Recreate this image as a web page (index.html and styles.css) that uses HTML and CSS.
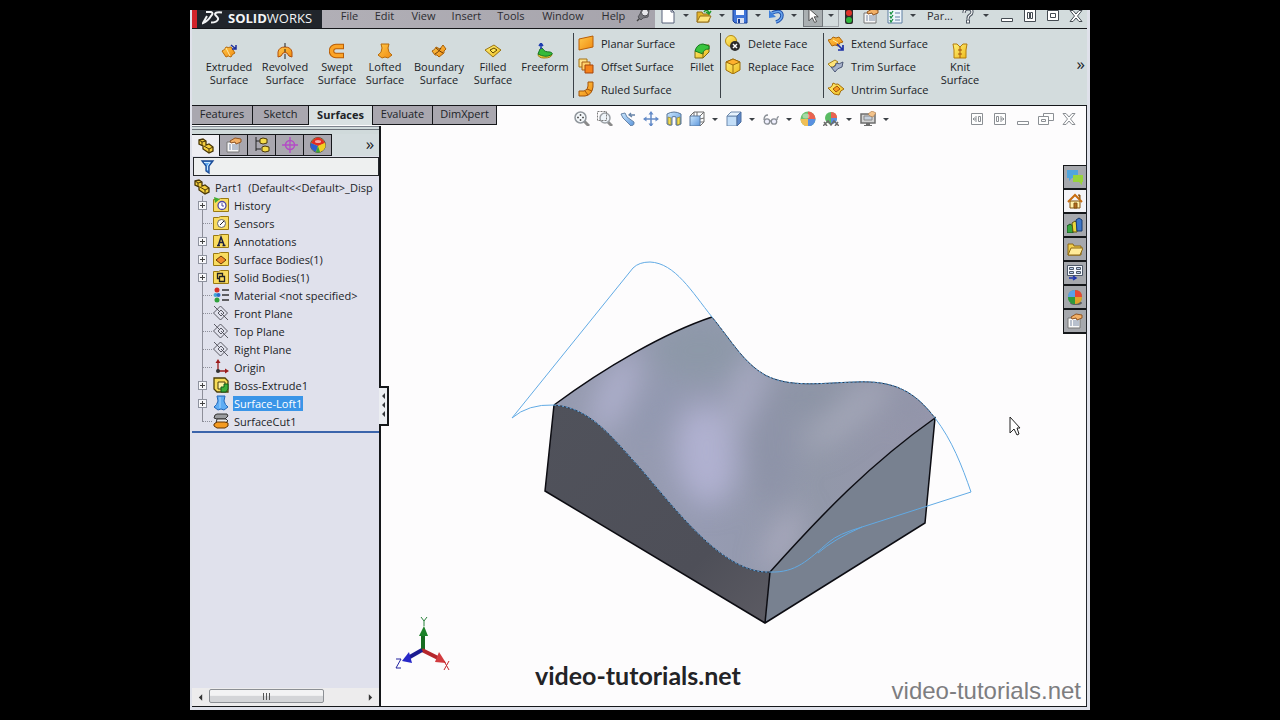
FILE: index.html
```html
<!DOCTYPE html>
<html lang="en">
<head>
<meta charset="utf-8">
<meta name="viewport" content="width=device-width, initial-scale=1">
<title>SolidWorks - Part1</title>
<link rel="stylesheet" href="styles.css">
</head>
<body>
<svg class="defs" aria-hidden="true">
  <defs>
    <linearGradient id="or" x1="0" y1="0" x2="1" y2="1"><stop offset="0" stop-color="#ffc94a"/><stop offset="1" stop-color="#f08a10"/></linearGradient>
    <linearGradient id="ye" x1="0" y1="0" x2="1" y2="1"><stop offset="0" stop-color="#fff27a"/><stop offset="1" stop-color="#eeb91c"/></linearGradient>
    <linearGradient id="bl" x1="0" y1="0" x2="1" y2="1"><stop offset="0" stop-color="#c6e6ff"/><stop offset="1" stop-color="#3f84d6"/></linearGradient>
  </defs>
  <symbol id="extruded" viewBox="0 0 16 16"><path d="M1 8q3-1 4-4 2 1 5 0l4 6q-3 1-4 4-3-2-5 0z" fill="url(#or)" stroke="#b86a08"/><path d="M5 5l4 8" stroke="#ffe9a0"/><path d="M10 2l5 4M15 2v4h-4" fill="none" stroke="#1e2f9c" stroke-width="1.5"/></symbol>
  <symbol id="revolved" viewBox="0 0 16 16"><path d="M1 14V9q1-5 7-5t7 5v5l-3-1-2-3q-2-1-4 0l-2 3z" fill="url(#or)" stroke="#b3500a"/><path d="M8 0v4m0 2v3m0 2v5" stroke="#222"/></symbol>
  <symbol id="swept" viewBox="0 0 16 16"><path d="M15 3.500H7a4.500 4.500 0 0 0 0 9h8" fill="none" stroke="#b85e08" stroke-width="5.500"/><path d="M14 3.500H7a4.500 4.500 0 0 0 0 9h7" fill="none" stroke="#fba427" stroke-width="3.500"/></symbol>
  <symbol id="lofted" viewBox="0 0 16 16"><path d="M4 1h8l-1 4q0 5 4 7l-4 3q-3-2-6 0l-4-3q4-2 4-7z" fill="url(#or)" stroke="#b86a08"/></symbol>
  <symbol id="boundary" viewBox="0 0 16 16"><path d="M1 8q3-1 4-4l4 2 3-4 3 4q-3 2-2 4l-5 4q-2-3-4-2z" fill="url(#or)" stroke="#a86008"/><path d="M4 11q4-2 6-6M5 5q3 3 7 5" fill="none" stroke="#713c05"/></symbol>
  <symbol id="filled" viewBox="0 0 16 16"><path d="M0 7l9-5 7 5-8 7z" fill="url(#ye)" stroke="#9a7410"/><path d="M5 7l4-2 3 2-4 3z" fill="#ffe85a" stroke="#5d4300"/></symbol>
  <symbol id="freeform" viewBox="0 0 16 16"><path d="M1 11q0 4 6 4 8 0 8-4z" fill="#f4d438" stroke="#9a7e10"/><path d="M1 11l2-5q2-2 3 0 1 3 7 3 4 1 1 3-6 3-13-1z" fill="#35bb3a" stroke="#177526"/><path d="M4 6V1M2 3l2-3 2 3" fill="none" stroke="#1c3bb0" stroke-width="1.500"/></symbol>
  <symbol id="planar" viewBox="0 0 16 16"><path d="M1 4l14-3v11L1 15z" fill="url(#or)" stroke="#b85e08"/></symbol>
  <symbol id="offset" viewBox="0 0 16 16"><path d="M1 1h8v8H1z" fill="#ffe48c" stroke="#a57214"/><path d="M4 4h8v8H4z" fill="#ffd06a" stroke="#a55c14"/><path d="M7 7h8v8H7z" fill="#f5821a" stroke="#a5440c"/></symbol>
  <symbol id="ruled" viewBox="0 0 16 16"><path d="M10 1h5v5q-1 8-8 9H1v-5h5q4-1 4-5z" fill="url(#or)" stroke="#a3540a"/><path d="M7 10l3 4M9 8l5 2" stroke="#a3540a"/></symbol>
  <symbol id="fillet" viewBox="0 0 16 16"><path d="M1 15V8l6-6h8v7l-6 6z" fill="url(#ye)" stroke="#7e6a10"/><path d="M1 8q2-7 8-7l6 2v3q-6 0-6 5L1 8z" fill="#39c43e" stroke="#157a20"/><path d="M9 15V9" stroke="#7e6a10"/></symbol>
  <symbol id="delface" viewBox="0 0 16 16"><circle cx="6" cy="6" r="5.500" fill="url(#ye)" stroke="#b48a14"/><circle cx="10" cy="11" r="5" fill="#2b2b2b"/><path d="M8 9l4 4m0-4l-4 4" stroke="#fff" stroke-width="1.500"/></symbol>
  <symbol id="repface" viewBox="0 0 16 16"><path d="M1 4l7-3 7 3v8l-7 4-7-4z" fill="url(#ye)" stroke="#9c6c0a"/><path d="M1 4l7 3 7-3-7-3z" fill="#ffb12e" stroke="#9c6c0a"/><path d="M8 7v9" stroke="#9c6c0a"/></symbol>
  <symbol id="extend" viewBox="0 0 16 16"><path d="M0 5q4 0 5-3 3 2 6 0l4 5q-4 0-5 4-3-2-6 0z" fill="url(#or)" stroke="#ad6406"/><path d="M5 5l5 3" stroke="#fff0a0"/><path d="M9 9l5 5M15 10v5h-5" fill="none" stroke="#1b2fa5" stroke-width="1.700"/></symbol>
  <symbol id="trim" viewBox="0 0 16 16"><path d="M0 6l7-4 3 2-6 6z" fill="#ffe47a" stroke="#a58220"/><path d="M3 9q5 1 5-4 3 2 7-1l-1 5q-5 1-7 5z" fill="#a9b4cc" stroke="#4a5675"/></symbol>
  <symbol id="untrim" viewBox="0 0 16 16"><path d="M0 7q4 0 5-5 3 2 5 1l6 5q-4 1-5 6l-5-1z" fill="url(#ye)" stroke="#a56c06"/><path d="M5 8l4-3 3 3-4 3z" fill="#f79b20" stroke="#a5540a"/></symbol>
  <symbol id="knit" viewBox="0 0 16 16"><path d="M1 1h4l3 3 3-3h4l-1 6v8H2V7z" fill="url(#ye)" stroke="#b47c0a"/><path d="M8 4v11M6 7h4M6 11h4" stroke="#a5540a"/></symbol>
  <symbol id="new" viewBox="0 0 16 16"><path d="M2 1h9l3 3v11H2z" fill="#fff" stroke="#59637a"/><path d="M11 1v3h3" fill="none" stroke="#59637a"/></symbol>
  <symbol id="open" viewBox="0 0 16 16"><path d="M1 14V4h5l1 2h6v8z" fill="#e4b52c" stroke="#96701a"/><path d="M1 14l3-6h11l-3 6z" fill="#ffe57c" stroke="#96701a"/><path d="M8 4q3-4 5 1m2-2l-2 3-3-2" fill="none" stroke="#259b2b" stroke-width="1.500"/></symbol>
  <symbol id="save" viewBox="0 0 16 16"><path d="M1 1h14v14H3l-2-2z" fill="#3f74d8" stroke="#173d94"/><path d="M4 1h8v6H4z" fill="#f4f7ff"/><path d="M5 10h7v5H5z" fill="#d7def0"/><path d="M6 11h2v4H6z" fill="#173d94"/></symbol>
  <symbol id="undo" viewBox="0 0 16 16"><path d="M4 5q9-4 10 2 0 5-6 7" fill="none" stroke="#1f4fa8" stroke-width="3.500"/><path d="M4 5q9-4 10 2 0 5-6 7" fill="none" stroke="#68a5ee" stroke-width="1.500"/><path d="M1 2v8l7-1z" fill="#3f80db"/></symbol>
  <symbol id="cursor" viewBox="0 0 16 20"><path d="M3 1v15l4-4 3 6 2.500-1-3-6h5z" fill="#fff" stroke="#333"/></symbol>
  <symbol id="traffic" viewBox="0 0 16 16"><rect x="4" y="-1" width="8" height="17" rx="2" fill="#2b2b2b"/><circle cx="8" cy="5" r="3" fill="#e03128"/><circle cx="8" cy="12" r="3" fill="#30b53c"/></symbol>
  <symbol id="handprop" viewBox="0 0 16 16"><path d="M1 5h12v10H1z" fill="#f8f8f8" stroke="#777"/><path d="M3 8h2m1 0h6M3 10h2m1 0h6M3 12h2m1 0h6" stroke="#7888a2"/><path d="M4 4l5-3 6 1v3l-5 2-1-2-4 1z" fill="#f2b066" stroke="#925522"/></symbol>
  <symbol id="options" viewBox="0 0 16 16"><path d="M1 1h14v14H1z" fill="#eef5fb" stroke="#5f7fa2"/><path d="M8 5h5M8 9h5M8 12h5" stroke="#5f7fa2"/><path d="M3 4l1 2 2-3M3 8l1 2 2-3M3 12l1 2 2-3" fill="none" stroke="#189040" stroke-width="1.300"/></symbol>
  <symbol id="help" viewBox="0 0 16 16"><path d="M4 5q0-4 4-4t4 3q0 2-2 3T8 11" fill="none" stroke="#4c5560" stroke-width="3.200"/><path d="M4 5q0-4 4-4t4 3q0 2-2 3T8 11" fill="none" stroke="#f8fafa" stroke-width="1.200"/><rect x="6.500" y="12" width="3" height="3" fill="#fff" stroke="#4c5560"/></symbol>
  <symbol id="pin" viewBox="0 0 16 16"><path d="M2 14l4-4" stroke="#444" stroke-width="1.500"/><path d="M3 10l2-3 2-5 7 1-1 7-5 1-2 2z" fill="#77777d" stroke="#55555b"/><circle cx="10" cy="5.500" r="3.500" fill="#e6e6ea" stroke="#4a4a50"/></symbol>
  <symbol id="min" viewBox="0 0 16 16"><path d="M2.500 10.500h11v3h-11z" fill="#fff" stroke="currentColor"/></symbol>
  <symbol id="tile" viewBox="0 0 16 16"><path d="M2.500 1.500h11v12h-11zM5.500 4.500h2v6h-2zM8.500 4.500h2v6h-2z" fill="#fff" stroke="currentColor"/></symbol>
  <symbol id="max" viewBox="0 0 16 16"><path d="M2.500 2.500h11v10h-11zM5.500 5.500h5v4h-5z" fill="#fff" stroke="currentColor"/></symbol>
  <symbol id="close" viewBox="0 0 16 16"><path d="M2 2.500h3l3 3.500 3-3.500h3L9.500 8l4.500 5.500h-3L8 10l-3 3.500H2L6.500 8z" fill="#fff" stroke="currentColor"/></symbol>
  <symbol id="cascade" viewBox="0 0 16 16"><path d="M5.500 2.500h10v7h-10z" fill="#fff" stroke="currentColor"/><path d="M.5 5.500h10v8H.5zM3.500 8.500h4v2h-4z" fill="#fff" stroke="currentColor"/></symbol>
  <symbol id="panL" viewBox="0 0 16 16"><path d="M2.500 2.500h11v11h-11z" fill="#fff" stroke="currentColor"/><path d="M7 5v6M9.500 5.500h2v5h-2zM4 8h3M5.500 6.500L4 8l1.500 1.500" fill="none" stroke="currentColor"/></symbol>
  <symbol id="panR" viewBox="0 0 16 16"><path d="M2.500 2.500h11v11h-11z" fill="#fff" stroke="currentColor"/><path d="M9 5v6M4.500 5.500h2v5h-2zM9 8h3m-1.500-1.500L12 8l-1.500 1.500" fill="none" stroke="currentColor"/></symbol>
  <symbol id="zoomfit" viewBox="0 0 16 16"><path d="M10 10l5 5" stroke="#777" stroke-width="3"/><circle cx="6.500" cy="6.500" r="5.500" fill="#f3f8fb" stroke="#7e858c" stroke-width="1.500"/><path d="M6.500 3v2M6.500 8v2M3 6.500h2M8 6.500h2" stroke="#444" stroke-width="1.500"/></symbol>
  <symbol id="zoomarea" viewBox="0 0 16 16"><path d="M10 10l5 5" stroke="#777" stroke-width="3"/><circle cx="8" cy="7" r="5" fill="#edf4fa" stroke="#8c9298" stroke-width="1.500"/><path d="M.5.500h9v9h-9z" fill="none" stroke="#666" stroke-dasharray="2 1"/></symbol>
  <symbol id="prevview" viewBox="0 0 16 16"><path d="M1 3l4-1 2 4 7 5q1 3-3 4L5 9 3 7z" fill="url(#bl)" stroke="#4c6f9a"/><path d="M15 4H9m2-2L9 4l3 2" fill="none" stroke="#4c6f9a" stroke-width="1.300"/></symbol>
  <symbol id="pan" viewBox="0 0 16 16"><path d="M8 1v14M1 8h14" stroke="#4a78bf" stroke-width="1.500"/><path d="M5.500 3.500L8 0l2.500 3.500zM5.500 12.500L8 16l2.500-3.500zM3.500 5.500L0 8l3.500 2.500zM12.500 5.500L16 8l-3.500 2.500z" fill="#4a78bf"/></symbol>
  <symbol id="section" viewBox="0 0 16 16"><path d="M1 3q7-4 14 0v10q-3 2-5 1V6q-2-1-4 0v8q-3 1-5-1z" fill="url(#bl)" stroke="#3d5f88"/><path d="M2 6l3 1v7l-3-1zM11 7l3-1v7l-3 1z" fill="#f2d835" stroke="#7b6b16" stroke-width=".7"/></symbol>
  <symbol id="orient" viewBox="0 0 16 16"><path d="M5 5V1h10v10h-4" fill="#fff" stroke="#555"/><path d="M1 5h10v10H1z" fill="url(#bl)" stroke="#3b618f"/><path d="M1 5l4-4M11 5l4-4M11 15l4-4M8 1v4M11 8l4-1" stroke="#555"/></symbol>
  <symbol id="display" viewBox="0 0 16 16"><path d="M1 5h10v10H1z" fill="#b9d9f8" stroke="#55779f"/><path d="M1 5l4-4h10l-4 4z" fill="#e3f1fd" stroke="#55779f"/><path d="M11 5l4-4v10l-4 4z" fill="#4275c2" stroke="#2f568f"/></symbol>
  <symbol id="glasses" viewBox="0 0 16 16"><circle cx="4" cy="10.500" r="2.700" fill="#eef" stroke="#757b84" stroke-width="1.300"/><circle cx="11" cy="10.500" r="2.700" fill="#eef" stroke="#757b84" stroke-width="1.300"/><path d="M1 9q0-5 4-5M14 9q0-4 2-3M7 10h1" fill="none" stroke="#757b84" stroke-width="1.300"/></symbol>
  <symbol id="ball" viewBox="0 0 16 16"><circle cx="8" cy="8" r="7.500" fill="#52b755"/><path d="M8 8V.5A7.500 7.500 0 0 1 15.500 8z" fill="#e74834"/><path d="M8 8h7.500A7.500 7.500 0 0 1 8 15.500z" fill="#3d7edb"/><path d="M8 8v7.500A7.500 7.500 0 0 1 .5 8z" fill="#f0b53a"/><ellipse cx="6" cy="5" rx="3.500" ry="2.500" fill="#fff" opacity=".4"/></symbol>
  <symbol id="balltask" viewBox="0 0 16 16"><ellipse cx="9" cy="14" rx="6" ry="2" fill="#5c5e63"/><circle cx="8" cy="8" r="7" fill="#3eb049"/><path d="M8 8V1q7 0 7 7z" fill="#e74834"/><path d="M1 8q0 7 7 7V8z" fill="#2f9a3c"/><path d="M8 8h7q0 7-7 7z" fill="#e0a52c"/><path d="M8 8V1q-7 0-7 7z" fill="#5a9fe8"/></symbol>
  <symbol id="scene" viewBox="0 0 16 16"><circle cx="8" cy="7" r="6" fill="#3eb049"/><path d="M8 7V1q6 0 6 6z" fill="#e74834"/><path d="M8 7h6q0 6-6 6z" fill="#3d7edb"/><path d="M0 15l5-5 3 4 3-4 5 5M1 11l3 4M15 11l-3 4" fill="none" stroke="#555" stroke-width="1.500"/></symbol>
  <symbol id="monitor" viewBox="0 0 16 16"><path d="M1 3h14v9H1z" fill="#ccc" stroke="#555" stroke-width="1.500"/><path d="M4 5h8v4H4z" fill="#bcc9d8" stroke="#777"/><path d="M6 12h4v2h2v1H4v-1h2z" fill="#555"/><path d="M8 3l4-3 4 2-3 4-3-1z" fill="#f2ba78" stroke="#a26a36" stroke-width=".7"/></symbol>
  <symbol id="part" viewBox="0 0 16 16"><path d="M1 2l4-1 3 2v4l3-1 4 3v4l-4 2-6-4V8L1 6z" fill="#f5cf3e" stroke="#4b3806" stroke-width="1.300"/><path d="M1 2l3 2 4-1M4 4v4M6 8l5 3 4-2M11 11v4" fill="none" stroke="#4b3806"/></symbol>
  <symbol id="config" viewBox="0 0 16 16"><path d="M2 0v14M2 4h4M2 12h5" stroke="#222" fill="none"/><path d="M6 2l3-1 4 1v4l-4 1-3-1zM8 10l3-1 4 1v4l-4 1-3-1z" fill="#f5dc4a" stroke="#4b3806"/></symbol>
  <symbol id="dimx" viewBox="0 0 16 16"><circle cx="8" cy="8" r="4.500" fill="none" stroke="#b44cc6" stroke-width="1.500"/><path d="M8 0v16M0 8h16" stroke="#b44cc6" stroke-width="1.300"/></symbol>
  <symbol id="appear" viewBox="0 0 16 16"><circle cx="8" cy="8" r="7.500" fill="#f1d024" stroke="#333" stroke-width=".7"/><path d="M8 9L1 6q7-11 14 0z" fill="#e32c22"/><path d="M8 9L1 6q-2 6 5 9z" fill="#2e5ed0"/><path d="M8 9l7-3q2 6-5 9z" fill="#f1d024"/><path d="M8 9l-2 6q2 1 4 0z" fill="#38a53b"/><ellipse cx="8" cy="4.500" rx="3" ry="1.500" fill="#fff" opacity=".6"/></symbol>
  <symbol id="filter" viewBox="0 0 16 16"><path d="M3 2h11l-4 5v7l-3-2V7z" fill="#5ea7ef" stroke="#1a4a96" stroke-width="1.300"/><path d="M5 3.500h6L8.500 7v4" fill="none" stroke="#c9e7ff"/></symbol>
  <symbol id="fold" viewBox="0 0 16 16"><path d="M.5 14.500v-12h5l2-1h8v13z" fill="#f9dc5f" stroke="#9a7a12"/></symbol>
  <symbol id="history" viewBox="0 0 16 16"><use href="#fold"/><circle cx="9" cy="8.500" r="4" fill="#fff" stroke="#5148a5" stroke-width="1.300"/><path d="M9 6v3h2" fill="none" stroke="#5148a5"/><path d="M1 0l6 2-5 4z" fill="#41ad2f"/></symbol>
  <symbol id="sensors" viewBox="0 0 16 16"><use href="#fold"/><circle cx="8.500" cy="8.500" r="4" fill="#fff" stroke="#666"/><path d="M7 10l4-4" stroke="#222"/></symbol>
  <symbol id="annot" viewBox="0 0 16 16"><use href="#fold"/><path d="M4 12.500h3M9.500 12.500h3M5.500 12L8 4l3 8M6.500 9.500h3.500" fill="none" stroke="#1d2140" stroke-width="1.500"/></symbol>
  <symbol id="surfb" viewBox="0 0 16 16"><use href="#fold"/><path d="M3 9l5-4 5 4-5 4z" fill="#f28b28" stroke="#6d3906"/></symbol>
  <symbol id="solidb" viewBox="0 0 16 16"><use href="#fold"/><path d="M4.500 4.500h5v5h-5z" fill="none" stroke="#222" stroke-width="1.300"/><path d="M6.500 7.500h5v5h-5z" fill="#f9dc5f" stroke="#222" stroke-width="1.300"/></symbol>
  <symbol id="material" viewBox="0 0 16 16"><path d="M9 3h7M9 8h7M9 13h7" stroke="#333" stroke-width="1.500"/><circle cx="4" cy="3" r="2.500" fill="#d52e25"/><circle cx="2.500" cy="8" r="2" fill="#42a6d6"/><circle cx="5.500" cy="8" r="2" fill="#2b68c8"/><circle cx="4" cy="13" r="2.500" fill="#2fa23c"/></symbol>
  <symbol id="plane" viewBox="0 0 16 16"><path d="M7.500 1l7 7-7 7-7-7zM1 1l6 6M8 8l7 7M5 8l3-3 3 3-3 3z" fill="none" stroke="#4b4b55" stroke-width=".9"/></symbol>
  <symbol id="origin" viewBox="0 0 16 16"><path d="M5 13V3M5 12h8" stroke="#9c1c1c" stroke-width="1.300" fill="none"/><path d="M2.500 4L5 0l2.500 4zM12 9.500l4 2.500-4 2.500z" fill="#9c1c1c"/><circle cx="5" cy="12" r="2" fill="#333"/></symbol>
  <symbol id="boss" viewBox="0 0 16 16"><path d="M1 1h11l3 3v11H4l-3-3z" fill="#f7dc58" stroke="#4d3f08" stroke-width="1.300"/><path d="M5 5h7v7H5z" fill="#fff3a4" stroke="#4d3f08"/><path d="M8 10h3V7h4v5l-2 3H8z" fill="#3cae38" stroke="#125c1c"/></symbol>
  <symbol id="loft" viewBox="0 0 16 16"><path d="M4 1h8l-1 5q1 4 4 6l-4 3q-3-2-6 0l-4-3q3-2 4-6z" fill="#5eacf3" stroke="#2267ba"/><path d="M7 2v11" stroke="#a5d4ff"/></symbol>
  <symbol id="scut" viewBox="0 0 16 16"><path d="M2 2l2-1h10l1 2-3 3H4L1 5z" fill="#9a9c9f" stroke="#333"/><path d="M4 6h9l2 2-3 2H3z" fill="#ececec" stroke="#333"/><path d="M1 11l3-2h8l3 1v3l-3 2H4l-3-2z" fill="#f49b22" stroke="#623504"/></symbol>
  <symbol id="forum" viewBox="0 0 16 16"><path d="M0 1h11v8H5l-3 3V9H0z" fill="#51a5dd"/><path d="M6 6h10v7h-1v3l-3-3H6z" fill="#98d43c"/></symbol>
  <symbol id="home" viewBox="0 0 16 16"><path d="M3 8h10v7H3z" fill="#fff0aa" stroke="#81500a"/><path d="M1 9l7-7 7 7" fill="none" stroke="#c86d10" stroke-width="2"/><path d="M11 2h2v4M7 10h3v5H7z" fill="#b66a22" stroke="#81500a"/></symbol>
  <symbol id="library" viewBox="0 0 16 16"><path d="M0 9l3-2 3 2v7H0z" fill="#35a63e" stroke="#15501e"/><path d="M5 6l3-2 2 2v9H6z" fill="#ead83a" stroke="#5e5410"/><path d="M9 3l3-2 3 2v11h-5z" fill="#3d77c9" stroke="#173a70"/></symbol>
  <symbol id="explorer" viewBox="0 0 16 16"><path d="M1 14V3h5l1 2h7v9z" fill="#f2cf4e" stroke="#8e6912"/><path d="M1 14l3-7h12l-3 7z" fill="#ffeb99" stroke="#8e6912"/></symbol>
  <symbol id="palette" viewBox="0 0 16 16"><path d="M.5.500h15v10H.5z" fill="#f6f9ff" stroke="#4d5868"/><path d="M2.500 2.500h4v2h-4zM9.500 2.500h4v2h-4zM2.500 6.500h4v2h-4zM9.500 6.500h4v2h-4z" fill="#bcd0ee" stroke="#4d5868"/><path d="M2 13h6M6 11l3 2-3 2" stroke="#1d34b0" stroke-width="1.500" fill="none"/></symbol>
</svg>

<main class="app">
  <header class="titlebar">
    <div class="brand">
      <svg class="brand-mark" viewBox="0 0 22 14" aria-hidden="true"><path d="M4 1h5q3 1 0 4-3 5-8 7l4-7M20 1.500q-6-1-7 1.500c0 2 4 3 3 5.500-1 3-5 3-7 3" fill="none" stroke="#f2f4f5" stroke-width="2"/></svg>
      <span><b>SOLID</b>WORKS</span>
    </div>
    <nav class="menu" aria-label="Main menu">
      <button class="w35">File</button><button class="w35">Edit</button><button class="w42">View</button><button class="w42">Insert</button><button class="w46">Tools</button><button class="w58">Window</button><button class="w42">Help</button>
      <button aria-label="Pin menu"><svg class="ic"><use href="#pin"/></svg></button>
    </nav>
    <div class="quick">
      <button class="q18" aria-label="New"><svg class="ic"><use href="#new"/></svg></button><button class="q18 arrow" aria-label="New options"></button>
      <button class="q18" aria-label="Open"><svg class="ic"><use href="#open"/></svg></button><button class="q18 arrow" aria-label="Open options"></button>
      <button class="q18" aria-label="Save"><svg class="ic"><use href="#save"/></svg></button><button class="q18 arrow" aria-label="Save options"></button>
      <button class="q18" aria-label="Undo"><svg class="ic"><use href="#undo"/></svg></button><button class="q18 arrow" aria-label="Undo options"></button>
      <button class="q20 pressed" aria-label="Select"><svg class="ic"><use href="#cursor"/></svg></button><button class="q16 arrow framed" aria-label="Select options"></button>
      <button class="q20" aria-label="Rebuild"><svg class="ic"><use href="#traffic"/></svg></button>
      <button class="q24" aria-label="File properties"><svg class="ic"><use href="#handprop"/></svg></button>
      <button class="q24" aria-label="Options"><svg class="ic"><use href="#options"/></svg></button><button class="q12 arrow" aria-label="Options list"></button>
      <span class="doc">Par...</span>
      <button class="q18" aria-label="Help"><svg class="ic"><use href="#help"/></svg></button><button class="q18 arrow" aria-label="Help options"></button>
      <div class="winctl">
        <button aria-label="Minimize"><svg class="ic"><use href="#min"/></svg></button><button aria-label="Tile"><svg class="ic"><use href="#tile"/></svg></button><button aria-label="Restore"><svg class="ic"><use href="#max"/></svg></button><button aria-label="Close"><svg class="ic"><use href="#close"/></svg></button>
      </div>
    </div>
  </header>

  <section class="ribbon" aria-label="Surfaces commands">
    <div class="group first">
      <button class="big w56"><svg class="ic"><use href="#extruded"/></svg>Extruded<br>Surface</button>
      <button class="big w56"><svg class="ic"><use href="#revolved"/></svg>Revolved<br>Surface</button>
      <button class="big w48"><svg class="ic"><use href="#swept"/></svg>Swept<br>Surface</button>
      <button class="big w48"><svg class="ic"><use href="#lofted"/></svg>Lofted<br>Surface</button>
      <button class="big w60"><svg class="ic"><use href="#boundary"/></svg>Boundary<br>Surface</button>
      <button class="big w48"><svg class="ic"><use href="#filled"/></svg>Filled<br>Surface</button>
      <button class="big w56"><svg class="ic"><use href="#freeform"/></svg>Freeform</button>
    </div>
    <div class="group">
      <div class="stack w110">
        <button><svg class="ic"><use href="#planar"/></svg>Planar Surface</button>
        <button><svg class="ic"><use href="#offset"/></svg>Offset Surface</button>
        <button><svg class="ic"><use href="#ruled"/></svg>Ruled Surface</button>
      </div>
      <button class="big w36"><svg class="ic"><use href="#fillet"/></svg>Fillet</button>
    </div>
    <div class="group">
      <div class="stack w102">
        <button><svg class="ic"><use href="#delface"/></svg>Delete Face</button>
        <button><svg class="ic"><use href="#repface"/></svg>Replace Face</button>
      </div>
    </div>
    <div class="group">
      <div class="stack w112">
        <button><svg class="ic"><use href="#extend"/></svg>Extend Surface</button>
        <button><svg class="ic"><use href="#trim"/></svg>Trim Surface</button>
        <button><svg class="ic"><use href="#untrim"/></svg>Untrim Surface</button>
      </div>
      <button class="big w48"><svg class="ic"><use href="#knit"/></svg>Knit<br>Surface</button>
    </div>
    <button class="more" aria-label="More commands">»</button>
  </section>

  <div class="tabrow">
    <nav class="tabs" aria-label="Command tabs">
      <button class="w61">Features</button><button class="w56">Sketch</button><button class="w64 active">Surfaces</button><button class="w60">Evaluate</button><button class="w64">DimXpert</button>
    </nav>
    <div class="hud">
      <button aria-label="Zoom to fit"><svg class="ic"><use href="#zoomfit"/></svg></button>
      <button aria-label="Zoom to area"><svg class="ic"><use href="#zoomarea"/></svg></button>
      <button aria-label="Previous view"><svg class="ic"><use href="#prevview"/></svg></button>
      <button aria-label="Pan"><svg class="ic"><use href="#pan"/></svg></button>
      <button aria-label="Section view"><svg class="ic"><use href="#section"/></svg></button>
      <button aria-label="View orientation"><svg class="ic"><use href="#orient"/></svg></button><button class="arrow" aria-label="Orientation list"></button>
      <button aria-label="Display style"><svg class="ic"><use href="#display"/></svg></button><button class="arrow" aria-label="Display list"></button>
      <button aria-label="Hide or show items"><svg class="ic"><use href="#glasses"/></svg></button><button class="arrow" aria-label="Items list"></button>
      <button aria-label="Edit appearance"><svg class="ic"><use href="#ball"/></svg></button>
      <button aria-label="Apply scene"><svg class="ic"><use href="#scene"/></svg></button><button class="arrow" aria-label="Scene list"></button>
      <button aria-label="View settings"><svg class="ic"><use href="#monitor"/></svg></button><button class="arrow" aria-label="View settings list"></button>
    </div>
    <div class="hud docctl">
      <button aria-label="Left pane"><svg class="ic"><use href="#panL"/></svg></button><button aria-label="Right pane"><svg class="ic"><use href="#panR"/></svg></button><button aria-label="Minimize document"><svg class="ic"><use href="#min"/></svg></button><button aria-label="Restore document"><svg class="ic"><use href="#cascade"/></svg></button><button aria-label="Close document"><svg class="ic"><use href="#close"/></svg></button>
    </div>
  </div>

  <div class="work">
    <aside class="side">
      <div class="rail"></div>
      <div class="ptabs">
        <button class="on" aria-label="Feature tree"><svg class="ic"><use href="#part"/></svg></button><button aria-label="Properties"><svg class="ic"><use href="#handprop"/></svg></button><button aria-label="Configurations"><svg class="ic"><use href="#config"/></svg></button><button aria-label="DimXpert manager"><svg class="ic"><use href="#dimx"/></svg></button><button aria-label="Display manager"><svg class="ic"><use href="#appear"/></svg></button>
        <button class="pmore" aria-label="More panes">»</button>
      </div>
      <label class="filter"><svg class="ic"><use href="#filter"/></svg><input type="text" aria-label="Filter tree"></label>
      <ul class="tree">
        <li class="root"><svg class="ic"><use href="#part"/></svg><span>Part1&nbsp; (Default&lt;&lt;Default&gt;_Disp</span></li>
        <li><button class="exp" aria-label="Expand History"></button><svg class="ic"><use href="#history"/></svg><span>History</span></li>
        <li><i></i><svg class="ic"><use href="#sensors"/></svg><span>Sensors</span></li>
        <li><button class="exp" aria-label="Expand Annotations"></button><svg class="ic"><use href="#annot"/></svg><span>Annotations</span></li>
        <li><button class="exp" aria-label="Expand Surface Bodies"></button><svg class="ic"><use href="#surfb"/></svg><span>Surface Bodies(1)</span></li>
        <li><button class="exp" aria-label="Expand Solid Bodies"></button><svg class="ic"><use href="#solidb"/></svg><span>Solid Bodies(1)</span></li>
        <li><i></i><svg class="ic"><use href="#material"/></svg><span>Material &lt;not specified&gt;</span></li>
        <li><i></i><svg class="ic"><use href="#plane"/></svg><span>Front Plane</span></li>
        <li><i></i><svg class="ic"><use href="#plane"/></svg><span>Top Plane</span></li>
        <li><i></i><svg class="ic"><use href="#plane"/></svg><span>Right Plane</span></li>
        <li><i></i><svg class="ic"><use href="#origin"/></svg><span>Origin</span></li>
        <li><button class="exp" aria-label="Expand Boss-Extrude1"></button><svg class="ic"><use href="#boss"/></svg><span>Boss-Extrude1</span></li>
        <li><button class="exp" aria-label="Expand Surface-Loft1"></button><svg class="ic"><use href="#loft"/></svg><span class="sel">Surface-Loft1</span></li>
        <li class="last"><i></i><svg class="ic"><use href="#scut"/></svg><span>SurfaceCut1</span></li>
      </ul>
      <div class="scroll">
        <button class="sa" aria-label="Scroll left"><svg viewBox="0 0 6 8"><path d="M5 0v8L1 4z"/></svg></button>
        <div class="track"><div class="thumb"><i></i><i></i><i></i></div></div>
        <button class="sa" aria-label="Scroll right"><svg viewBox="0 0 6 8"><path d="M1 0v8l4-4z"/></svg></button>
      </div>
      <button class="handle" aria-label="Collapse panel"><svg viewBox="0 0 6 36"><path d="M5 5v6L2 8zM5 14v6l-3-3zM5 23v6l-3-3z"/></svg></button>
    </aside>

    <section class="view" aria-label="Graphics area">
      <svg class="scene" viewBox="381 126 705 580" role="img" aria-label="Solid block cut by a lofted surface">
        <defs>
          <clipPath id="top"><path id="topshape" d="M554 405C604 368 664 333 712 317C733 343 744 363 765 375C790 388 820 383 855 382C895 380 915 392 935 418C870 464 822 514 770 572C725 574 680 515 640 468C610 435 590 408 554 405Z"/></clipPath>
          <linearGradient id="base" x1="560" y1="400" x2="935" y2="420" gradientUnits="userSpaceOnUse"><stop offset="0" stop-color="#969bb0"/><stop offset=".4" stop-color="#969bb2"/><stop offset=".7" stop-color="#9298a9"/><stop offset="1" stop-color="#9696ac"/></linearGradient>
          <linearGradient id="left" x1="0" y1="0" x2="1" y2="1"><stop offset="0" stop-color="#50525b"/><stop offset=".7" stop-color="#4e4f58"/><stop offset="1" stop-color="#5c5b63"/></linearGradient>
          <filter id="soft" x="-60%" y="-60%" width="220%" height="220%"><feGaussianBlur stdDeviation="14"/></filter>
        </defs>
        <path d="M554 405L545 491L765 623L770 572C725 574 680 515 640 468C610 435 590 408 554 405Z" fill="url(#left)"/>
        <path d="M935 418L925 523L765 623L770 572C822 514 870 464 935 418Z" fill="#788190"/>
        <use href="#topshape" fill="url(#base)"/>
        <g clip-path="url(#top)"><g filter="url(#soft)">
          <ellipse cx="700" cy="350" rx="48" ry="32" fill="#8d98a8"/>
          <ellipse cx="655" cy="410" rx="12" ry="38" fill="#9198b0" transform="rotate(35 655 410)"/>
          <ellipse cx="615" cy="393" rx="15" ry="44" fill="#afb0cd" transform="rotate(25 615 393)"/>
          <ellipse cx="706" cy="455" rx="30" ry="50" fill="#b0b1d0" transform="rotate(-6 706 455)"/>
          <ellipse cx="744" cy="395" rx="14" ry="46" fill="#a8aac2" transform="rotate(22 744 395)"/>
          <ellipse cx="772" cy="450" rx="20" ry="56" fill="#8d93a7"/>
          <ellipse cx="810" cy="398" rx="36" ry="14" fill="#8b93a4"/>
          <ellipse cx="848" cy="414" rx="12" ry="54" fill="#a6a9ba" transform="rotate(50 848 414)"/>
          <ellipse cx="905" cy="405" rx="24" ry="12" fill="#9094a8" transform="rotate(40 905 405)"/>
          <ellipse cx="782" cy="540" rx="9" ry="36" fill="#b2b0c4" transform="rotate(30 782 540)"/>
        </g></g>
        <path d="M554 405C604 368 664 333 712 317M554 405L545 491L765 623L925 523L935 418C870 464 822 514 770 572L765 623" fill="none" stroke="#0c0c12" stroke-width="1.500"/>
        <path d="M712 317C733 343 744 363 765 375C790 388 820 383 855 382C895 380 915 392 935 418M554 405C590 408 610 435 640 468C680 515 725 574 770 572" fill="none" stroke="#1d3048"/>
        <path d="M712 317C733 343 744 363 765 375C790 388 820 383 855 382C895 380 915 392 935 418M554 405C590 408 610 435 640 468C680 515 725 574 770 572" fill="none" stroke="#62a7df" stroke-dasharray="2 2"/>
        <path d="M712 317C692 292 675 263 650 262Q639 262 633 268L512 418Q528 404 554 405M935 418C952 440 962 466 971 492L862 527Q838 534 829 542C808 560 796 573 770 572M862 527Q834 539 818 553" fill="none" stroke="#61aae4"/>
        <path d="M1010 417v16l4-4 3 6 2-1-2-6h3z" fill="#fff" stroke="#222"/>
      </svg>
      <svg class="triad" viewBox="394 614 58 58" role="img" aria-label="Axes">
        <path d="M423 650v-18" stroke="#176b20" stroke-width="4"/><path d="M419 636l5-10 4 10z" fill="#1c8128"/>
        <path d="M422 650l18 9" stroke="#b5262c" stroke-width="4"/><path d="M439 652l7 11-11-1z" fill="#d23b3f"/>
        <path d="M422 650l-14 8" stroke="#1c1c90" stroke-width="4"/><path d="M409 652l-7 9 10 2z" fill="#2727c8"/>
        <path d="M421 617l3 4 3-4M424 621v5" fill="none" stroke="#27803a"/><path d="M444 661l5 9m0-9l-5 9" stroke="#c4272d"/><path d="M396 659h5l-5 9h5" fill="none" stroke="#2323a0"/>
      </svg>
      <p class="mark">video-tutorials.net</p>
      <p class="mark2">video-tutorials.net</p>
      <nav class="task" aria-label="Task pane">
        <button aria-label="Forum"><svg class="ic"><use href="#forum"/></svg></button><button class="on" aria-label="Resources"><svg class="ic"><use href="#home"/></svg></button><button aria-label="Design library"><svg class="ic"><use href="#library"/></svg></button><button aria-label="File explorer"><svg class="ic"><use href="#explorer"/></svg></button><button aria-label="View palette"><svg class="ic"><use href="#palette"/></svg></button><button aria-label="Appearances"><svg class="ic"><use href="#balltask"/></svg></button><button aria-label="Custom properties"><svg class="ic"><use href="#handprop"/></svg></button>
      </nav>
    </section>
  </div>
</main>
</body>
</html>
```
FILE: styles.css
```css
* { box-sizing: border-box; }
body {
  margin: 0;
  height: 100vh;
  padding: 10px 190px;
  background: #000;
  color: #202327;
  font: 11px/13px "Open Sans", "Noto Sans", sans-serif;
}
button {
  margin: 0;
  padding: 0;
  border: 0;
  background: none;
  color: inherit;
  font: inherit;
}
.defs { position: absolute; width: 0; height: 0; }
.ic { display: block; flex: none; width: 16px; height: 16px; }

.app {
  display: flex;
  flex-direction: column;
  height: 100%;
  min-width: 900px;
  border: solid #dfe1ea;
  border-width: 0 3px 3px 2px;
  background: #d3dcdd;
}

/* title bar */
.titlebar {
  display: flex;
  flex: none;
  height: 19px;
  overflow: hidden;
  border-bottom: 1px solid #15171a;
  color: #2c2c31;
}
.brand {
  display: flex;
  align-items: center;
  gap: 4px;
  width: 131px;
  padding: 0 0 2px 5px;
  border-left: 5px solid #d2232a;
  background: #20252b;
  color: #f4f5f6;
  font: 13px/16px "Open Sans", sans-serif;
}
.brand-mark { width: 22px; height: 14px; }
.menu {
  display: flex;
  align-items: center;
  width: 336px;
  padding: 0 0 8px 10px;
  background: linear-gradient(90deg, #b1afb6, #a6a4ac);
}
.quick {
  display: flex;
  flex: 1;
  align-items: center;
  height: 11px;
  padding-left: 4px;
}
.quick button { display: flex; flex: none; align-items: center; justify-content: center; }
.q12 { width: 12px; } .q16 { width: 16px; } .q18 { width: 18px; } .q20 { width: 20px; } .q24 { width: 24px; }
.arrow::before {
  content: "";
  border: 3px solid transparent;
  border-top-color: #3c4146;
  border-bottom: 0;
}
.quick .pressed, .quick .framed { height: 22px; border: 1px solid #70767a; }
.quick .pressed { background: #a9afb1; }
.quick .framed { border-left: 0; border-color: #a0a6aa; }
.doc { width: 40px; padding-left: 8px; }
.winctl { display: flex; margin-left: auto; color: #444b52; }
.winctl button { width: 23px; }

.w35 { width: 35px; } .w36 { width: 36px; } .w42 { width: 43px; } .w46 { width: 46px; } .w48 { width: 48px; }
.w56 { width: 56px; } .w58 { width: 58px; } .w60 { width: 60px; } .w61 { width: 61px; } .w64 { width: 64px; }
.w102 { width: 102px; } .w110 { width: 110px; } .w112 { width: 112px; }

/* ribbon */
.ribbon {
  display: flex;
  flex: none;
  height: 77px;
  padding: 4px 0 7px;
  border-bottom: 1px solid #15171a;
}
.group { display: flex; padding-left: 1px; }
.group.first { padding-left: 9px; }
.group + .group { border-left: 1px solid #3a4147; padding-left: 0; }
.big {
  align-self: flex-start;
  padding-top: 10px;
  white-space: nowrap;
  text-align: center;
}
.big .ic { margin: 0 auto 1px; }
.stack { display: flex; flex-direction: column; }
.stack button {
  display: flex;
  flex: none;
  align-items: center;
  gap: 7px;
  height: 23px;
  padding: 0 0 3px 4px;
  white-space: nowrap;
}
.more { margin-left: auto; padding: 0 2px 4px; font-size: 17px; }

/* command tabs and view toolbar */
.tabrow { display: flex; flex: none; height: 20px; background: #fdfcfd; border-right: 1px solid #23262b; }
.tabs { display: flex; height: 19px; background: #a9a7af; }
.tabs button { border: solid #15171a; border-width: 0 1px 1px 0; padding-bottom: 3px; white-space: nowrap; }
.tabs .active { background: #d9e1e2; font-weight: 700; border-bottom: 0; }
.hud { display: flex; height: 26px; margin-left: 73px; color: #787c82; }
.hud button { display: flex; align-items: center; justify-content: center; width: 23px; }
.hud .arrow { width: 14px; }
.hud .ic { opacity: .85; }
.docctl { margin-left: auto; padding-right: 6px; }

/* feature tree panel */
.work { display: flex; flex: 1; min-height: 0; border-bottom: 1px solid #15171a; }
.side {
  position: relative;
  z-index: 1;
  display: flex;
  flex-direction: column;
  flex: none;
  width: 189px;
  border-right: 2px solid #15171a;
  background: #e0e1ec;
}
.rail { height: 8px; background: #d0dadb; border-top: 1px solid #7d848d; }
.rail::after { content: ""; display: block; margin-top: 2px; border-top: 1px solid #6d747c; }
.ptabs { display: flex; height: 22px; background: #d3dcde; }
.ptabs button {
  display: flex;
  align-items: center;
  justify-content: center;
  width: 28px;
  border: solid #15171a;
  border-width: 1px 1px 1px 0;
  background: #a9a7af;
}
.ptabs .on { background: #eeeef3; border-bottom: 0; }
.ptabs .pmore { margin-left: auto; width: 18px; border: 0; background: none; padding-bottom: 3px; font-size: 17px; }
.filter {
  display: flex;
  align-items: center;
  height: 19px;
  margin: 1px 0 2px 1px;
  padding-left: 5px;
  border: 1px solid #25282c;
  background: #eef0f0;
}
.filter input { flex: 1; min-width: 0; height: 15px; border: 0; background: none; outline: 0; }
.tree { flex: none; margin: 0; padding: 0 0 1px; list-style: none; border-bottom: 2px solid #3b64ab; }
.tree li {
  display: flex;
  align-items: center;
  height: 18px;
  padding-left: 6px;
  white-space: nowrap;
  background: linear-gradient(#8d8e99, #8d8e99) 10px 0 / 1px 18px no-repeat;
}
.tree li.root { padding-left: 2px; background: none; }
.tree li.last { background-size: 1px 9px; }
.tree span { margin-left: 4px; padding: 1px; }
.tree .sel { background: #3a95e8; color: #fff; }
.exp {
  width: 9px;
  height: 9px;
  margin-right: 6px;
  border: 1px solid #8e929e;
  background: linear-gradient(#444, #444) 1px 3px / 5px 1px no-repeat, linear-gradient(#444, #444) 3px 1px / 1px 5px no-repeat, #f7f7fa;
}
.tree i { width: 10px; margin: 0 1px 0 4px; border-top: 1px dotted #8d8e99; }
.scroll { display: flex; align-items: center; margin-top: auto; height: 18px; padding-bottom: 2px; background: #edeced; }
.sa { width: 17px; height: 14px; }
.sa svg { width: 5px; height: 7px; fill: #333; }
.track { flex: 1; }
.thumb {
  display: flex;
  align-items: center;
  justify-content: center;
  gap: 2px;
  width: 75%;
  height: 14px;
  border: 1px solid #8c8f94;
  border-radius: 2px;
  background: linear-gradient(#f3f3f4 45%, #d4d5d8 50%);
}
.thumb i { width: 1px; height: 7px; background: #555; }
.handle {
  position: absolute;
  left: 187px;
  top: 260px;
  width: 10px;
  height: 40px;
  border: 1px solid #15171a;
  border-width: 2px 2px 2px 0;
  background: #eceef2;
}
.handle svg { display: block; width: 6px; height: 36px; margin-left: 1px; fill: #33363a; }

/* graphics area */
.view { position: relative; flex: 1; min-width: 0; background: #fdfcfd; border-right: 1px solid #23262b; }
.scene { display: block; width: 100%; height: 100%; }
.triad { position: absolute; left: 13px; bottom: 34px; width: 58px; height: 58px; }
.mark, .mark2 { position: absolute; margin: 0; white-space: nowrap; }
.mark { left: 154px; bottom: 17px; color: #232326; font: 700 25px/28px Lato, sans-serif; }
.mark2 { right: 5px; bottom: 2px; color: #7d7d80; font: 24px/26px "Liberation Sans", Arial, sans-serif; }
.task { position: absolute; top: 39px; right: 0; width: 23px; border: solid #15171a; border-width: 1px 0 0 1px; }
.task button { display: flex; align-items: center; justify-content: center; width: 100%; height: 24px; border-bottom: 2px solid #15171a; background: #a6a8ad; }
.task .on { background: #f4f4f8; }
```
